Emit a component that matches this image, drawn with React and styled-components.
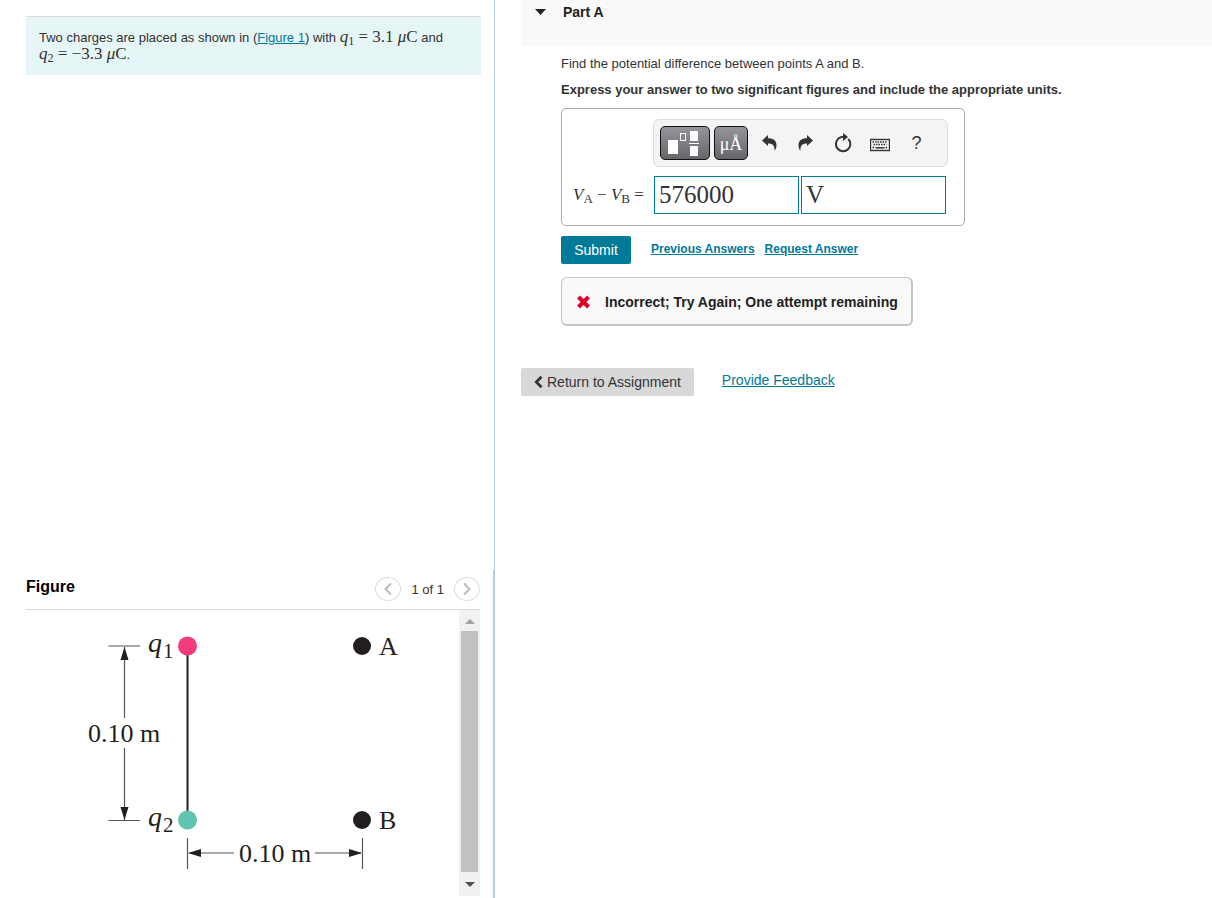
import React from 'react';
import styled, { createGlobalStyle } from 'styled-components';

const sans = '"Liberation Sans", Arial, sans-serif';
const serif = '"Liberation Serif", "Times New Roman", serif';
const teal = '#007a99';

const GlobalStyle = createGlobalStyle`
  *, *::before, *::after { box-sizing: border-box; }
  body { margin: 0; background: #fff; color: #333; font: 13px/16px ${sans}; }
  button, input { font: inherit; color: inherit; margin: 0; padding: 0; }
  button { border: 0; background: none; cursor: pointer; }
  p, h1, h2 { margin: 0; }
  svg { display: block; }
`;

const Page = styled.div`
  display: grid;
  grid-template-columns: minmax(0, 495fr) minmax(0, 717fr);
  min-height: 100vh;
`;

const Side = styled.aside`
  display: flex;
  flex-direction: column;
  justify-content: space-between;
  border-right: 1px solid #b8ccdc;
`;

const Intro = styled.p`
  margin: 16px 13px 0 26px;
  padding: 12px 24px 12px 13px;
  border-top: 1px solid #dbdbdb;
  background: #e6f6f6;
`;

const MathText = styled.span`
  font-family: ${serif};
  font-size: 17px;
  white-space: nowrap;
  sub { font-size: 12px; line-height: 0; vertical-align: -3px; }
`;

const Link = styled.a`
  color: ${teal};
  font-size: ${(p) => p.$size || 13}px;
  font-weight: ${(p) => (p.$bold ? 700 : 400)};
`;

const FigurePanel = styled.section`
  padding: 7px 13px 2px 26px;
  border-right: 1px solid #b8ccdc;
`;

const FigureHeader = styled.header`
  display: flex;
  align-items: flex-start;
  justify-content: space-between;
  height: 33px;
  border-bottom: 1px solid #dbdbdb;
`;

const FigureTitle = styled.h2`
  color: #000;
  font-size: 16px;
  line-height: 20px;
`;

const Pager = styled.nav`
  display: flex;
  align-items: center;
  gap: 10px;
`;

const PageCount = styled.span`
  padding-top: 2px;
`;

const PagerButton = styled.button`
  display: grid;
  place-items: center;
  width: 26px;
  height: 24px;
  border: 1px solid #ddd;
  border-radius: 50%;
  color: #bbb;
`;

const FigureBody = styled.div`
  display: flex;
  height: 286px;
`;

const Canvas = styled.div`
  flex: 1;
  min-width: 0;
  overflow: hidden;
`;

const Scrollbar = styled.div`
  display: flex;
  flex-direction: column;
  width: 21px;
  background: #f1f1f1;
`;

const ScrollButton = styled.button`
  display: grid;
  place-items: center;
  height: ${(p) => (p.$tall ? 24 : 21)}px;
  color: ${(p) => p.$color};
`;

const Thumb = styled.div`
  flex: 1;
  margin: 0 2px;
  background: #c1c1c1;
`;

const Main = styled.main`
  padding-left: 26px;
`;

const PartHeader = styled.header`
  height: 46px;
  padding: 4px 14px;
  background: #f9f9f9;
`;

const PartToggle = styled.button`
  display: flex;
  align-items: center;
  gap: 17px;
  color: #222;
  font-size: 14px;
  font-weight: 700;
`;

const Question = styled.section`
  display: flex;
  flex-direction: column;
  align-items: flex-start;
  padding: 10px 40px 0;
`;

const Prompt = styled.p`
  margin-bottom: 10px;
  font-weight: ${(p) => (p.$bold ? 700 : 400)};
`;

const AnswerBox = styled.form`
  display: grid;
  grid-template-columns: 80px auto;
  align-items: center;
  row-gap: 9px;
  padding: 10px 16px 11px 11px;
  border: 1px solid #aaa;
  border-radius: 5px;
`;

const Toolbar = styled.div`
  grid-column: 2;
  display: flex;
  gap: 4px;
  width: 295px;
  height: 48px;
  padding: 6px;
  border: 1px solid #ddd;
  border-radius: 6px;
  background: #f4f4f4;
`;

const DarkButton = styled.button`
  display: grid;
  place-items: center;
  width: ${(p) => p.$width}px;
  height: 34px;
  border: 1px solid #111;
  border-radius: 5px;
  background: linear-gradient(#94949c, #66666a);
  color: #fff;
  font-family: ${serif};
  font-size: 18px;
  line-height: 20px;
  padding-top: 2px;
`;

const ToolButton = styled.button`
  display: grid;
  place-items: center;
  width: 33px;
  height: 34px;
  color: #333;
  font-size: 18px;
`;

const AnswerLabel = styled.label`
  font-family: ${serif};
  font-size: 17px;
  white-space: nowrap;
  sub { font-size: 13px; line-height: 0; vertical-align: -3px; }
`;

const Fields = styled.div`
  display: flex;
  gap: 2px;
  padding-left: 1px;
`;

const Field = styled.input`
  width: 145px;
  height: 38px;
  padding: 0 4px;
  border: 1px solid ${teal};
  border-radius: 0;
  background: #fff;
  font-family: ${serif};
  font-size: 25px;
`;

const Actions = styled.div`
  display: flex;
  gap: 10px;
  margin: 10px 0 13px;
`;

const ActionLink = styled(Link)`
  padding-top: 5px;
`;

const Submit = styled.button`
  width: 70px;
  height: 28px;
  margin-right: 10px;
  border-radius: 2px;
  background: ${teal};
  color: #fff;
  font-size: 14px;
`;

const Feedback = styled.div`
  display: flex;
  align-items: center;
  gap: 14px;
  height: 49px;
  padding: 1px 13px 0 14px;
  border: 1px solid #c4c4c4;
  border-right-width: 2px;
  border-bottom-width: 2px;
  border-radius: 6px;
  background: #f9f9f9;
  color: #222;
  font-size: 14px;
  font-weight: 700;
`;

const Footer = styled.footer`
  display: flex;
  gap: 28px;
  margin-top: 42px;
`;

const FooterLink = styled(Link)`
  padding-top: 4px;
`;

const ReturnButton = styled.button`
  display: flex;
  align-items: center;
  gap: 3px;
  height: 28px;
  padding: 0 13px 0 12px;
  border-radius: 2px;
  background: #d8d8d8;
  font-size: 14px;
`;

function Chevron({ right }) {
  return (
    <svg width="12" height="14" viewBox="0 0 12 14" fill="none" stroke="currentColor" strokeWidth="2">
      <path d={right ? 'M3 1.500 8.500 7 3 12.500' : 'M9 1.500 3.500 7 9 12.500'} />
    </svg>
  );
}

function BackIcon() {
  return (
    <svg width="11" height="14" viewBox="0 0 11 14" fill="none" stroke="currentColor" strokeWidth="2.800">
      <path d="M8.500 1.800 3.300 7l5.200 5.200" />
    </svg>
  );
}

function TemplateIcon() {
  return (
    <svg width="34" height="28" viewBox="0 0 34 28">
      <rect x="0" y="10" width="10" height="14" fill="#fff" />
      <rect x="12.500" y="3.500" width="5" height="7" fill="none" stroke="#fff" />
      <rect x="22" y="1" width="8" height="10" fill="#fff" />
      <rect x="21" y="13" width="10" height="1" fill="#fff" />
      <rect x="22" y="16" width="8" height="10" fill="#fff" />
    </svg>
  );
}

function ArrowIcon({ flip }) {
  return (
    <svg width="16" height="18" viewBox="0 0 16 18">
      <path
        transform={flip ? 'translate(16 0) scale(-1 1)' : undefined}
        d="M1 6.500 7 1v3.200c5.500 0 8.500 2.500 8.500 7 0 2.300-.9 4.300-2 5.600C14 12 12 9.500 7 9.500V12z"
        fill="currentColor"
      />
    </svg>
  );
}

function ResetIcon() {
  return (
    <svg width="20" height="20" viewBox="0 0 20 20">
      <path d="M15.300 6A7.200 7.200 0 1 1 5.500 5.500Q7.500 3.800 11 3.800" fill="none" stroke="currentColor" strokeWidth="2" />
      <path d="M10 0l5 4-5 4z" fill="currentColor" />
    </svg>
  );
}

function KeyboardIcon() {
  return (
    <svg width="20" height="18" viewBox="0 0 20 18" fill="none" stroke="currentColor">
      <rect x="0.500" y="5.500" width="19" height="11" strokeWidth="1.400" />
      <path d="M2.500 8h15M3.500 10.500h13M2.500 13.500h2M15.500 13.500h2" strokeWidth="1.500" strokeDasharray="1.500 1" />
      <path d="M5.500 13.800h9" strokeWidth="1.500" />
    </svg>
  );
}

function ChargeDiagram() {
  return (
    <svg width="433" height="286" viewBox="0 0 433 286" role="img" aria-label="Charges q1 and q2 with points A and B" fontFamily={serif} fontSize="26" fill="#231f20">
      <g stroke="#555" strokeWidth="1.200">
        <path d="M82.500 36H114M82.500 210.500H114M98.500 37V108M98.500 138V210" />
        <path d="M161.500 228V259M336.500 228V259M163 243H208M289 243H335" />
      </g>
      <path d="M98.500 37l-4 13h8zM98.500 210l-4-13h8zM162 243l13-4v8zM336 243l-13-4v8z" />
      <path d="M161.500 36V210" stroke="#231f20" strokeWidth="2" />
      <circle cx="161.500" cy="36" r="9.500" fill="#f03c78" />
      <circle cx="161.500" cy="210" r="9.500" fill="#5fc4b0" />
      <circle cx="336" cy="36" r="9" />
      <circle cx="336" cy="210" r="9" />
      <text x="122" y="42" fontSize="28" fontStyle="italic">q</text>
      <text x="137" y="48" fontSize="21">1</text>
      <text x="122" y="216" fontSize="28" fontStyle="italic">q</text>
      <text x="137" y="222" fontSize="21">2</text>
      <text x="353" y="45">A</text>
      <text x="353" y="219">B</text>
      <text x="62" y="132">0.10 m</text>
      <text x="213" y="252">0.10 m</text>
    </svg>
  );
}

export default function App() {
  return (
    <Page>
      <GlobalStyle />
      <Side>
        <Intro>
          Two charges are placed as shown in (<Link href="#figure">Figure 1</Link>) with{' '}
          <MathText><i>q</i><sub>1</sub> = 3.1 <i>μ</i>C</MathText> and{' '}
          <MathText><i>q</i><sub>2</sub> = −3.3 <i>μ</i>C</MathText>.
        </Intro>
        <FigurePanel id="figure">
          <FigureHeader>
            <FigureTitle>Figure</FigureTitle>
            <Pager aria-label="Figures">
              <PagerButton aria-label="Previous figure"><Chevron /></PagerButton>
              <PageCount>1 of 1</PageCount>
              <PagerButton aria-label="Next figure"><Chevron right /></PagerButton>
            </Pager>
          </FigureHeader>
          <FigureBody>
            <Canvas><ChargeDiagram /></Canvas>
            <Scrollbar>
              <ScrollButton aria-label="Scroll up" $color="#a3a3a3">
                <svg width="10" height="6" viewBox="0 0 10 6"><path d="M0 6 5 1l5 5z" fill="currentColor" /></svg>
              </ScrollButton>
              <Thumb />
              <ScrollButton aria-label="Scroll down" $tall $color="#505050">
                <svg width="10" height="6" viewBox="0 0 10 6"><path d="M0 1h10L5 6z" fill="currentColor" /></svg>
              </ScrollButton>
            </Scrollbar>
          </FigureBody>
        </FigurePanel>
      </Side>
      <Main>
        <PartHeader>
          <PartToggle aria-expanded="true">
            <svg width="11" height="6" viewBox="0 0 11 6"><path d="M0 0h11L5.500 6z" fill="currentColor" /></svg>
            Part A
          </PartToggle>
        </PartHeader>
        <Question>
          <Prompt>Find the potential difference between points A and B.</Prompt>
          <Prompt $bold>Express your answer to two significant figures and include the appropriate units.</Prompt>
          <AnswerBox onSubmit={(e) => e.preventDefault()}>
            <Toolbar role="toolbar" aria-label="Answer tools">
              <DarkButton type="button" $width={50} aria-label="Templates"><TemplateIcon /></DarkButton>
              <DarkButton type="button" $width={34}>μÅ</DarkButton>
              <ToolButton type="button" aria-label="Undo"><ArrowIcon /></ToolButton>
              <ToolButton type="button" aria-label="Redo"><ArrowIcon flip /></ToolButton>
              <ToolButton type="button" aria-label="Reset"><ResetIcon /></ToolButton>
              <ToolButton type="button" aria-label="Keyboard shortcuts"><KeyboardIcon /></ToolButton>
              <ToolButton type="button">?</ToolButton>
            </Toolbar>
            <AnswerLabel htmlFor="value"><i>V</i><sub>A</sub> − <i>V</i><sub>B</sub> =</AnswerLabel>
            <Fields>
              <Field id="value" defaultValue="576000" />
              <Field aria-label="Units" defaultValue="V" />
            </Fields>
          </AnswerBox>
          <Actions>
            <Submit>Submit</Submit>
            <ActionLink href="#previous" $bold $size={12}>Previous Answers</ActionLink>
            <ActionLink href="#request" $bold $size={12}>Request Answer</ActionLink>
          </Actions>
          <Feedback role="status">
            <svg width="15" height="14" viewBox="0 0 15 14"><path d="M2.500 2l10 10M12.500 2l-10 10" stroke="#e0002b" strokeWidth="4" /></svg>
            Incorrect; Try Again; One attempt remaining
          </Feedback>
        </Question>
        <Footer>
          <ReturnButton><BackIcon />Return to Assignment</ReturnButton>
          <FooterLink href="#feedback" $size={14}>Provide Feedback</FooterLink>
        </Footer>
      </Main>
    </Page>
  );
}
